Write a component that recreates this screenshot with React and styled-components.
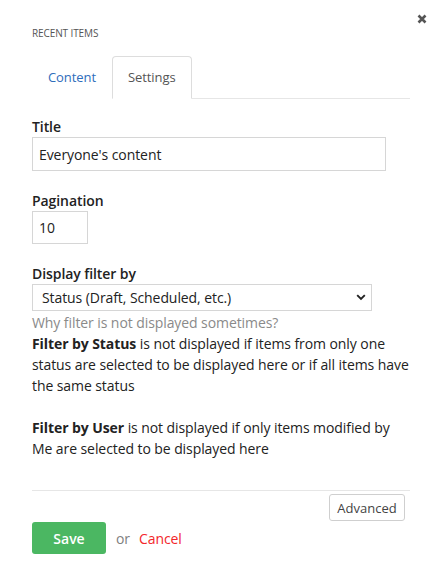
import React from "react";
import styled, { createGlobalStyle } from "styled-components";

const Global = createGlobalStyle`
  html, body { margin: 0; padding: 0; background: #fff; }
  body { font-family: "Open Sans", "Noto Sans", sans-serif; color: #222; font-size: 14px; line-height: 21px; letter-spacing: -0.08px; }
  * { box-sizing: border-box; }
`;

const Panel = styled.div`
  position: relative;
  width: 434px;
  height: 574px;
  padding: 26px 24px 0 32px;
  display: flex;
  flex-direction: column;
`;

const Heading = styled.div`
  font-size: 10px;
  line-height: 14px;
  text-transform: uppercase;
  color: #555;
  letter-spacing: -0.1px;
`;

const Close = styled.button`
  position: absolute;
  top: 13px;
  right: 6px;
  width: 12px;
  height: 12px;
  padding: 0;
  border: 0;
  background: none;
  display: flex;
  align-items: center;
  justify-content: center;
  cursor: pointer;
`;

const TabBar = styled.div`
  display: flex;
  margin-top: 16px;
  border-bottom: 1px solid #e6e6e6;
`;

const Tab = styled.div`
  height: 43px;
  margin-bottom: -1px;
  padding: 0 15px;
  display: flex;
  align-items: center;
  font-size: 13px;
  border: 1px solid ${(p) => (p.$active ? "#dddddd" : "transparent")};
  border-bottom-color: ${(p) => (p.$active ? "#fff" : "transparent")};
  border-radius: 4px 4px 0 0;
  background: #fff;
  color: ${(p) => (p.$active ? "#555" : "#2e6dbb")};
`;

const Form = styled.div`
  display: flex;
  flex-direction: column;
  margin-top: 17px;
`;

const Group = styled.div`
  display: flex;
  flex-direction: column;
  margin-bottom: ${(p) => p.$mb ?? 19}px;
`;

const Label = styled.label`
  font-weight: 600;
  font-size: 14px;
  line-height: 21px;
  color: #222;
`;

const TextInput = styled.input`
  width: ${(p) => p.$w}px;
  height: ${(p) => p.$h}px;
  border: 1px solid #d6d6d6;
  padding: 0 6px;
  font-family: inherit;
  font-size: 14px;
  letter-spacing: inherit;
  color: #222;
  outline: none;
  background: #fff;
`;

const SelectWrap = styled.div`
  position: relative;
  width: 340px;
  height: 27px;
`;

const Select = styled.select`
  appearance: none;
  -webkit-appearance: none;
  width: 100%;
  height: 100%;
  border: 1px solid #d6d6d6;
  border-radius: 0;
  background: #fff;
  padding: 0 26px 0 9px;
  font-family: inherit;
  font-size: 14px;
  letter-spacing: inherit;
  color: #222;
  outline: none;
`;

const Chevron = styled.svg`
  position: absolute;
  right: 6px;
  top: 10px;
  pointer-events: none;
`;

const Hint = styled.div`
  color: #8a8a8a;
  margin-top: 1px;
`;

const Para = styled.p`
  margin: 0 0 21px;
  color: #222;
  b { font-weight: 700; }
`;

const Divider = styled.hr`
  border: 0;
  border-top: 1px solid #e6e6e6;
  margin: 10px 0 0;
  width: 378px;
`;

const AdvancedRow = styled.div`
  display: flex;
  justify-content: flex-end;
  padding-right: 5px;
  margin-top: 3px;
`;

const GhostButton = styled.button`
  height: 27px;
  width: 76px;
  border: 1px solid #cfcfcf;
  border-radius: 3px;
  background: #fff;
  font-family: inherit;
  font-size: 13px;
  color: #444;
  padding: 0;
`;

const Actions = styled.div`
  display: flex;
  align-items: center;
  margin-top: 1px;
`;

const SaveButton = styled.button`
  width: 74px;
  height: 32px;
  border: 0;
  border-radius: 3px;
  background: #4bb762;
  color: #fff;
  font-family: inherit;
  font-size: 14px;
  font-weight: 600;
  padding: 0;
`;

const Or = styled.span`
  color: #808080;
  margin: 0 9px 0 10px;
`;

const CancelLink = styled.a`
  color: #f3262b;
  text-decoration: none;
`;

export default function App() {
  return (
    <>
      <Global />
      <Panel>
        <Heading>Recent items</Heading>
        <Close aria-label="Close">
          <svg width="10" height="10" viewBox="0 0 10 10">
            <path d="M1.5 1.5 L8.5 8.5 M8.5 1.5 L1.5 8.5" stroke="#555" strokeWidth="2.6" strokeLinecap="butt" />
          </svg>
        </Close>
        <TabBar>
          <Tab>Content</Tab>
          <Tab $active>Settings</Tab>
        </TabBar>
        <Form>
          <Group>
            <Label>Title</Label>
            <TextInput $w={354} $h={34} defaultValue="Everyone's content" />
          </Group>
          <Group>
            <Label>Pagination</Label>
            <TextInput $w={56} $h={33} defaultValue="10" />
          </Group>
          <Group $mb={0}>
            <Label>Display filter by</Label>
            <SelectWrap>
              <Select defaultValue="status">
                <option value="status">Status (Draft, Scheduled, etc.)</option>
              </Select>
              <Chevron width="10" height="7" viewBox="0 0 10 7">
                <path d="M1.2 1.2 L5 5 L8.8 1.2" fill="none" stroke="#222" strokeWidth="1.9" />
              </Chevron>
            </SelectWrap>
            <Hint>Why filter is not displayed sometimes?</Hint>
            <Para>
              <b>Filter by Status</b> is not displayed if items from only one status are selected to be displayed here or if all items have the same status
            </Para>
            <Para>
              <b>Filter by User</b> is not displayed if only items modified by Me are selected to be displayed here
            </Para>
          </Group>
          <Divider />
          <AdvancedRow>
            <GhostButton>Advanced</GhostButton>
          </AdvancedRow>
          <Actions>
            <SaveButton>Save</SaveButton>
            <Or>or</Or>
            <CancelLink href="#">Cancel</CancelLink>
          </Actions>
        </Form>
      </Panel>
    </>
  );
}
